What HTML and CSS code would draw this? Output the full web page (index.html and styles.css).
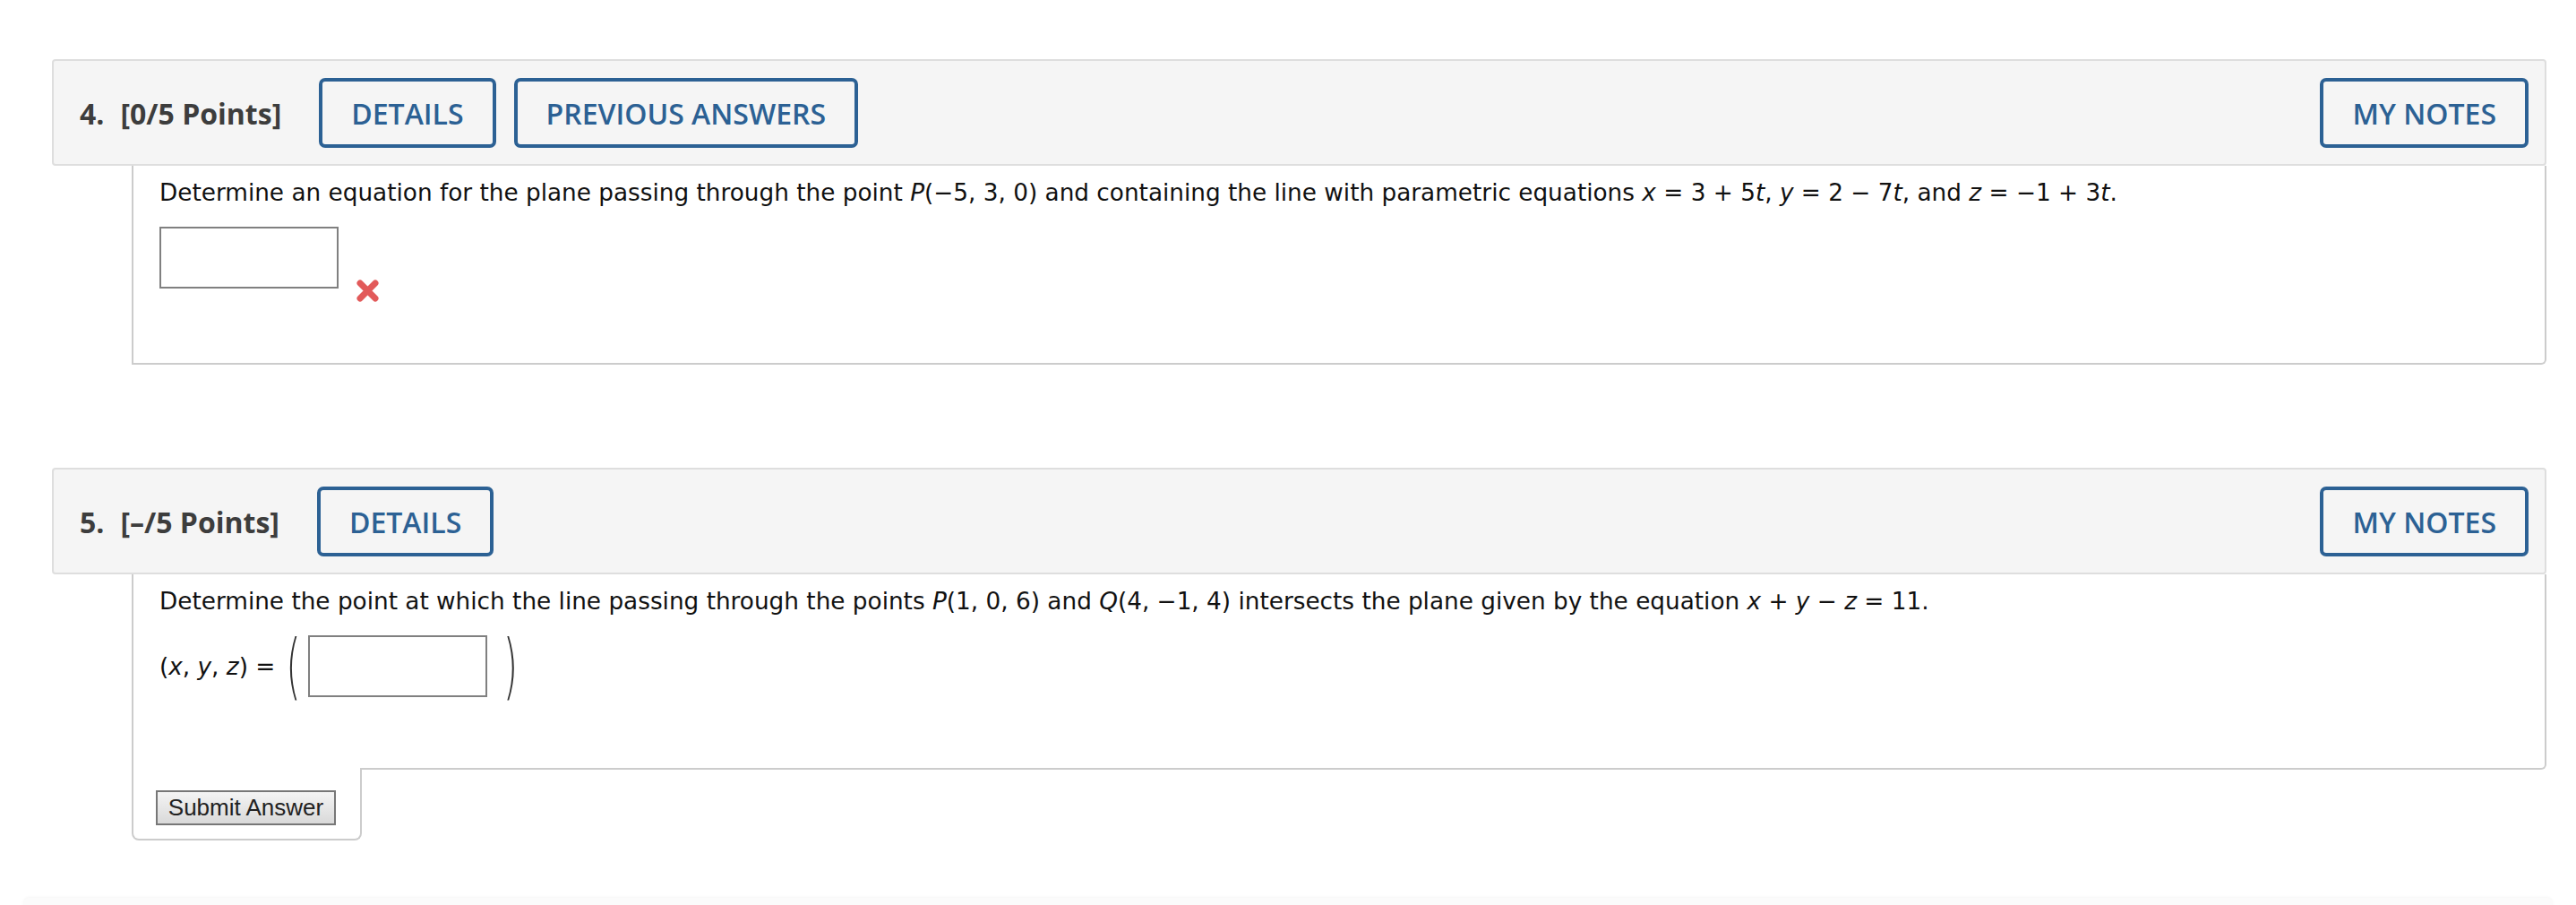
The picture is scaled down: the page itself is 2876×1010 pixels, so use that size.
FILE: index.html
```html
<!DOCTYPE html>
<html>

<head>
    <meta charset='utf-8'>
    <title>Questions</title>
    <meta name='viewport' content='width=device-width, initial-scale=1'>
    <link rel="stylesheet" href="styles.css">
</head>

<body>
    <div class="question q4">
        <div class="q_head">
            <span class="q_num">4.</span><span class="q_points">[0/5 Points]</span>
            <button class="btn_blue btn_first">DETAILS</button>
            <button class="btn_blue">PREVIOUS ANSWERS</button>
            <button class="btn_blue btn_notes">MY NOTES</button>
        </div>
        <div class="q_body">
            <p>Determine an equation for the plane passing through the point <i>P</i>(−5, 3, 0) and containing the line with parametric equations <i>x</i> = 3 + 5<i>t</i>, <i>y</i> = 2 − 7<i>t</i>, and <i>z</i> = −1 + 3<i>t</i>.</p>
            <div class="answer_row">
                <input type="text" class="answer">
                <svg class="wrong" width="27" height="27" viewBox="0 0 27 27">
                    <path d="M5 5 L22 22 M22 5 L5 22" stroke="#e25a5a" stroke-width="7" stroke-linecap="round" />
                </svg>
            </div>
        </div>
    </div>

    <div class="question q5">
        <div class="q_head">
            <span class="q_num">5.</span><span class="q_points">[–/5 Points]</span>
            <button class="btn_blue btn_first">DETAILS</button>
            <button class="btn_blue btn_notes">MY NOTES</button>
        </div>
        <div class="q_body">
            <p>Determine the point at which the line passing through the points <i>P</i>(1, 0, 6) and <i>Q</i>(4, −1, 4) intersects the plane given by the equation <i>x</i> + <i>y</i> − <i>z</i> = 11.</p>
            <div class="answer_row point_row">
                <span class="lhs">(<i>x</i>, <i>y</i>, <i>z</i>) =</span>
                <span class="paren">(</span>
                <input type="text" class="answer">
                <span class="paren paren_right">)</span>
            </div>
        </div>
        <div class="submit_tab">
            <button class="btn_submit">Submit Answer</button>
        </div>
    </div>

    <div class="next_edge"></div>
</body>

</html>
```

FILE: styles.css
```css
* {
    margin: 0;
    padding: 0;
    box-sizing: border-box;
}

body {
    background-color: white;
    font-family: "DejaVu Sans", Verdana, sans-serif;
    color: #111;
}

.question {
    margin-left: 58px;
    width: 2785px;
}

.q4 {
    margin-top: 66px;
}

.q5 {
    margin-top: 115px;
}

.q_head {
    display: flex;
    align-items: center;
    background-color: #f5f5f5;
    border: 2px solid #dedede;
    border-radius: 4px;
    padding: 19px 18px 18px 29px;
    font-family: "Open Sans", sans-serif;
}

.q_num {
    font-size: 32px;
    font-weight: bold;
    color: #3d3d3d;
    margin-right: 18px;
}

.q_points {
    font-size: 32px;
    font-weight: bold;
    color: #3d3d3d;
}

.btn_blue {
    height: 78px;
    padding: 0 32px;
    margin-left: 20px;
    background-color: transparent;
    border: 4px solid #2c6194;
    border-radius: 7px;
    font-family: "Open Sans", sans-serif;
    font-size: 32px;
    font-weight: 600;
    color: #2c6194;
}

.btn_first {
    margin-left: 42px;
}

.btn_notes {
    margin-left: auto;
}

.q_body {
    margin-left: 89px;
    border-left: 2px solid #cccccc;
    border-right: 2px solid #cccccc;
    border-bottom: 2px solid #cccccc;
    border-bottom-right-radius: 6px;
    padding: 12px 29px 83px 29px;
    font-size: 26.3px;
    line-height: 36px;
}

.q5 .q_body {
    padding-bottom: 79px;
}

.answer_row {
    display: flex;
    align-items: flex-start;
    margin-top: 20px;
}

.answer {
    width: 200px;
    height: 69px;
    border: 2px solid #808080;
    outline: none;
    background-color: white;
}

.wrong {
    margin-left: 19px;
    margin-top: 58px;
    margin-bottom: -16px;
    filter: blur(0.6px);
}

.point_row {
    align-items: center;
}

.lhs {
    font-size: 26.3px;
}

.paren {
    display: inline-block;
    font-family: "DejaVu Sans", sans-serif;
    font-weight: 200;
    font-size: 42px;
    line-height: 42px;
    color: #333;
    transform: scaleY(1.9);
    margin: 0 8px 0 12px;
}

.paren_right {
    margin: 0 0 0 18px;
}

.submit_tab {
    margin-left: 89px;
    margin-top: -2px;
    width: 257px;
    background-color: white;
    border: 2px solid #cccccc;
    border-top: none;
    border-radius: 0 0 8px 8px;
    padding: 25px 0 15px 25px;
}

.btn_submit {
    display: block;
    width: 201px;
    height: 39px;
    border: 2px solid #777777;
    background: linear-gradient(#f4f4f4, #d9d9d9);
    font-family: "Liberation Sans", Arial, sans-serif;
    font-size: 26px;
    color: #222;
}

.next_edge {
    margin: 64px 26px 0 26px;
    height: 12px;
    border-radius: 6px 6px 0 0;
    background-color: #fbfbfb;
    box-shadow: 0 -1px 3px rgba(0, 0, 0, 0.04);
}
```
